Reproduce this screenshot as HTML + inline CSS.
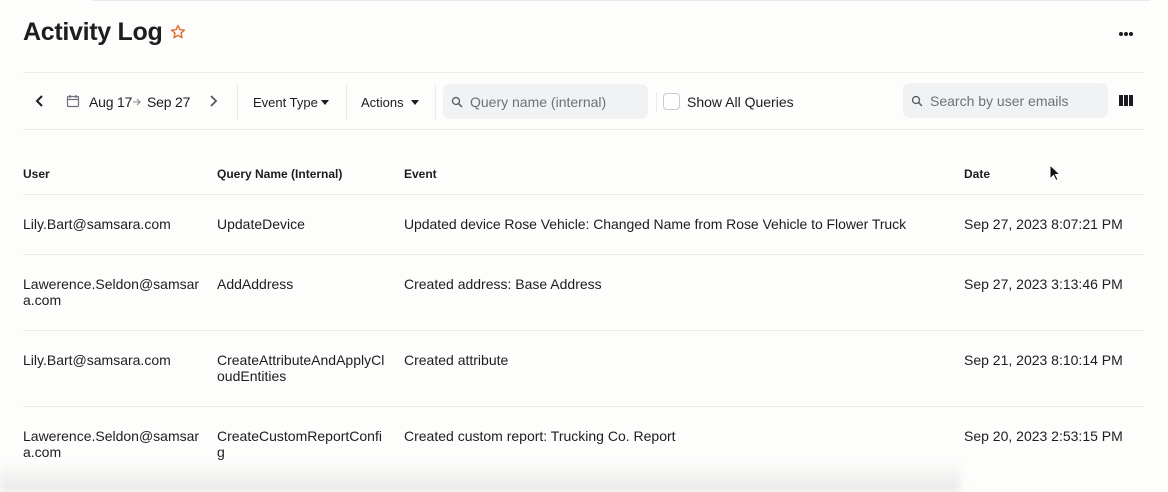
<!DOCTYPE html>
<html><head><style>
*{margin:0;padding:0;box-sizing:border-box}
body{width:1168px;height:487px;overflow:hidden;background:#fdfdfc;font-family:"Liberation Sans",sans-serif;color:#1b1d21;position:relative}
.a{position:absolute;white-space:nowrap}
.t{font-size:14px}
.h{font-size:12px;font-weight:bold}
.line{position:absolute;left:23px;right:24px;height:1px;background:#ececea}
.vs{position:absolute;width:1px;background:#ebebea;top:84px;height:36px}
.box{position:absolute;background:#f1f2f4;border-radius:7px}
.ph{color:#6d7078;font-size:14px}
.dot{position:absolute;width:4px;height:4px;border-radius:2px;background:#1b1d21;top:32px}
</style></head><body>
<div class="a" style="left:92px;right:18px;top:0;height:1px;background:#e8eaf0"></div>
<div class="a" style="left:23px;top:18px;font-size:25px;font-weight:bold;letter-spacing:-0.3px">Activity Log</div>
<svg class="a" style="left:170px;top:24px" width="16" height="16" viewBox="0 0 16 16"><path d="M8 1.5l1.9 4.2 4.5.4-3.4 3 1 4.5L8 11.3 4 13.6l1-4.5-3.4-3 4.5-.4z" fill="none" stroke="#e06a2c" stroke-width="1.4" stroke-linejoin="round"/></svg>
<div class="dot" style="left:1119px"></div><div class="dot" style="left:1124px"></div><div class="dot" style="left:1129px"></div>
<div class="line" style="top:72px"></div>
<div class="line" style="top:129px"></div>
<svg class="a" style="left:35px;top:95px" width="10" height="12" viewBox="0 0 10 12"><path d="M7 1L2 6l5 5" fill="none" stroke="#1b1d21" stroke-width="2"/></svg>
<svg class="a" style="left:66px;top:94px" width="14" height="14" viewBox="0 0 14 14"><rect x="1.5" y="2.5" width="11" height="10" rx="1" fill="none" stroke="#6d7078" stroke-width="1.2"/><path d="M1.5 5.5h11M4 1v3M10 1v3" stroke="#6d7078" stroke-width="1.2"/></svg>
<div class="a t" style="left:89px;top:94px;letter-spacing:-0.2px">Aug 17</div>
<svg class="a" style="left:132px;top:97px" width="10" height="10" viewBox="0 0 10 10"><path d="M1 5h7M5 2l3 3-3 3" fill="none" stroke="#888" stroke-width="1.1"/></svg>
<div class="a t" style="left:147px;top:94px;letter-spacing:-0.2px">Sep 27</div>
<svg class="a" style="left:208px;top:95px" width="10" height="12" viewBox="0 0 10 12"><path d="M3 1l5 5-5 5" fill="none" stroke="#55585f" stroke-width="1.8"/></svg>
<div class="vs" style="left:237px"></div>
<div class="a" style="left:253px;top:95px;font-size:13px">Event Type</div>
<div class="a" style="left:321px;top:100px;border:4px solid transparent;border-top:5px solid #1b1d21"></div>
<div class="vs" style="left:346px"></div>
<div class="a" style="left:361px;top:95px;font-size:13px">Actions</div>
<div class="a" style="left:411px;top:100px;border:4px solid transparent;border-top:5px solid #1b1d21"></div>
<div class="vs" style="left:435px"></div>
<div class="box" style="left:443px;top:84px;width:205px;height:35px"></div>
<svg class="a" style="left:451px;top:96px" width="12" height="12" viewBox="0 0 12 12"><circle cx="5" cy="5" r="3.5" fill="none" stroke="#55585f" stroke-width="1.3"/><path d="M7.5 7.5L11 11" stroke="#55585f" stroke-width="1.4"/></svg>
<div class="a ph" style="left:470px;top:94px">Query name (internal)</div>
<div class="vs" style="left:656px;top:92px;height:20px"></div>
<div class="a" style="left:663px;top:93px;width:17px;height:17px;border:1px solid #c9cbd0;border-radius:4px;background:#fff"></div>
<div class="a t" style="left:687px;top:94px">Show All Queries</div>
<div class="box" style="left:903px;top:83px;width:205px;height:35px"></div>
<svg class="a" style="left:911px;top:95px" width="12" height="12" viewBox="0 0 12 12"><circle cx="5" cy="5" r="3.5" fill="none" stroke="#55585f" stroke-width="1.3"/><path d="M7.5 7.5L11 11" stroke="#55585f" stroke-width="1.4"/></svg>
<div class="a ph" style="left:930px;top:93px">Search by user emails</div>
<svg class="a" style="left:1119px;top:95px" width="14" height="11" viewBox="0 0 14 11"><rect x="0" y="0" width="4" height="11" fill="#1b1d21"/><rect x="5" y="0" width="4" height="11" fill="#1b1d21"/><rect x="10" y="0" width="4" height="11" fill="#1b1d21"/></svg>
<div class="a h" style="left:23px;top:167px">User</div>
<div class="a h" style="left:217px;top:167px">Query Name (Internal)</div>
<div class="a h" style="left:404px;top:167px">Event</div>
<div class="a h" style="left:964px;top:167px">Date</div>
<svg class="a" style="left:1049px;top:164px" width="12" height="18" viewBox="0 0 12 18"><path d="M1 1v14l3.5-3.5 2.5 5 2-1-2.5-5H11z" fill="#111" stroke="#fff" stroke-width="1"/></svg>
<div class="line" style="top:194px"></div>
<div class="a t" style="left:23px;top:216px">Lily.Bart@samsara.com</div>
<div class="a t" style="left:217px;top:216px">UpdateDevice</div>
<div class="a t" style="left:404px;top:216px;letter-spacing:-0.05px">Updated device Rose Vehicle: Changed Name from Rose Vehicle to Flower Truck</div>
<div class="a t" style="left:964px;top:216px">Sep 27, 2023 8:07:21 PM</div>
<div class="line" style="top:254px"></div>
<div class="a t" style="left:23px;top:276px;line-height:16px">Lawerence.Seldon@samsar<br>a.com</div>
<div class="a t" style="left:217px;top:276px">AddAddress</div>
<div class="a t" style="left:404px;top:276px">Created address: Base Address</div>
<div class="a t" style="left:964px;top:276px">Sep 27, 2023 3:13:46 PM</div>
<div class="line" style="top:330px"></div>
<div class="a t" style="left:23px;top:352px">Lily.Bart@samsara.com</div>
<div class="a t" style="left:217px;top:352px;line-height:16px">CreateAttributeAndApplyCl<br>oudEntities</div>
<div class="a t" style="left:404px;top:352px">Created attribute</div>
<div class="a t" style="left:964px;top:352px">Sep 21, 2023 8:10:14 PM</div>
<div class="line" style="top:406px"></div>
<div class="a t" style="left:23px;top:428px;line-height:16px">Lawerence.Seldon@samsar<br>a.com</div>
<div class="a t" style="left:217px;top:428px;line-height:16px">CreateCustomReportConfi<br>g</div>
<div class="a t" style="left:404px;top:428px">Created custom report: Trucking Co. Report</div>
<div class="a t" style="left:964px;top:428px">Sep 20, 2023 2:53:15 PM</div>
<div class="a" style="left:0;top:462px;width:960px;height:30px;background:linear-gradient(to bottom,rgba(230,230,228,0),rgba(225,225,223,0.8));filter:blur(4px)"></div>
</body></html>
